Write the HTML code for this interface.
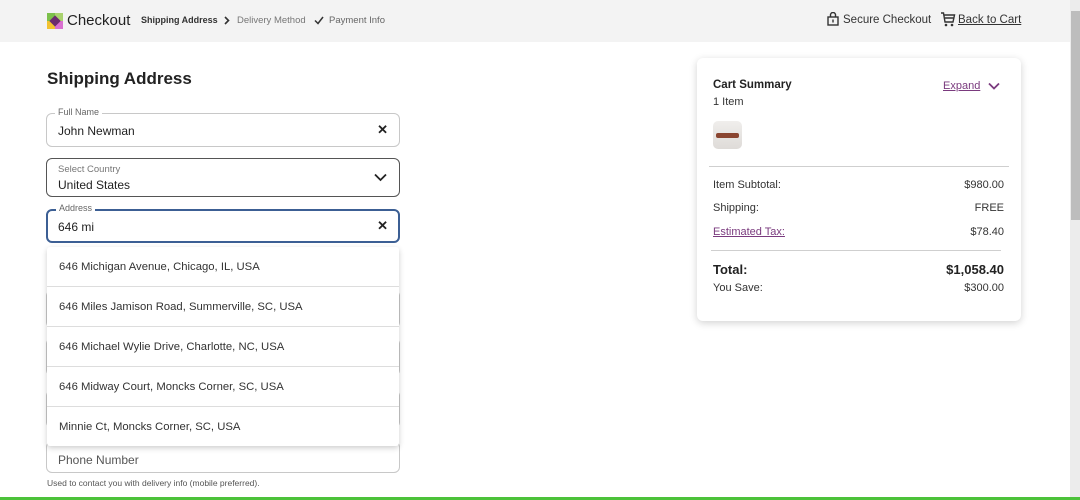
<!DOCTYPE html>
<html><head><style>
*{margin:0;padding:0;box-sizing:border-box}
body{width:1080px;height:500px;overflow:hidden;background:#fff;font-family:"Liberation Sans",sans-serif;color:#222;position:relative}
.a{position:absolute;white-space:nowrap}
.hdr{position:absolute;left:0;top:0;width:1070px;height:42px;background:#f3f3f3}
.box{position:absolute;left:46px;width:354px;border:1px solid #c8c8c8;border-radius:6px;background:#fff}
.lbl{position:absolute;left:8px;top:-7px;background:#fff;padding:0 3px;font-size:9px;color:#666}
.val{position:absolute;left:11px;font-size:12px;color:#222}
.x{position:absolute;right:11px;font-size:13px;font-weight:bold;color:#222}
.dd{position:absolute;left:47px;top:247px;width:352px;height:199px;background:#fff;box-shadow:0 2px 6px rgba(0,0,0,.2);border-radius:3px}
.it{height:40px;border-bottom:1px solid #ddd;font-size:11.3px;padding-left:12px;line-height:40px;color:#333}
.card{position:absolute;left:697px;top:58px;width:324px;height:263px;background:#fff;border-radius:6px;box-shadow:0 2px 8px rgba(0,0,0,.18)}
.r{position:absolute;font-size:11px;color:#333}
</style></head><body>
<div class="hdr"></div>
<svg class="a" style="left:46px;top:12px" width="18" height="18" viewBox="0 0 18 18">
<rect x="1" y="1" width="8" height="8" fill="#7cc04b"/>
<rect x="9" y="1" width="8" height="8" fill="#a9d26e"/>
<rect x="1" y="9" width="8" height="8" fill="#f2c230"/>
<rect x="9" y="9" width="8" height="8" fill="#d970d0"/>
<rect x="5" y="5" width="8" height="8" fill="#6b2b6e" transform="rotate(45 9 9)"/>
</svg>
<div class="a" style="left:67px;top:12px;font-size:15px;color:#222">Checkout</div>
<div class="a" style="left:141px;top:15px;font-size:9px;font-weight:bold;color:#333">Shipping Address</div>
<svg class="a" style="left:224px;top:16px" width="6" height="9" viewBox="0 0 6 9"><path d="M1 1l3.5 3.5L1 8" fill="none" stroke="#333" stroke-width="1.6"/></svg>
<div class="a" style="left:237px;top:15px;font-size:9.5px;color:#777">Delivery Method</div>
<svg class="a" style="left:314px;top:16px" width="10" height="9" viewBox="0 0 10 9"><path d="M1 4.5l3 3 5-6.5" fill="none" stroke="#333" stroke-width="1.5"/></svg>
<div class="a" style="left:329px;top:15px;font-size:9.5px;color:#666">Payment Info</div>
<svg class="a" style="left:827px;top:12px" width="12" height="14" viewBox="0 0 12 14"><rect x="1" y="5" width="10" height="8" fill="none" stroke="#333" stroke-width="1.4"/><path d="M3.5 5V3a2.5 2.5 0 0 1 5 0v2" fill="none" stroke="#333" stroke-width="1.4"/><rect x="5.3" y="7.5" width="1.4" height="3" fill="#333"/></svg>
<div class="a" style="left:843px;top:14px;font-size:11.5px;color:#333">Secure Checkout</div>
<svg class="a" style="left:940px;top:12px" width="16" height="15" viewBox="0 0 16 15"><path d="M1 1h2.5l1.5 9h8l1.5-7H4.5M5 6h9" fill="none" stroke="#333" stroke-width="1.4"/><circle cx="6" cy="13" r="1.3" fill="#333"/><circle cx="12" cy="13" r="1.3" fill="#333"/></svg>
<div class="a" style="left:958px;top:14px;font-size:11.5px;color:#333;text-decoration:underline">Back to Cart</div>
<div class="a" style="left:1070px;top:0;width:10px;height:497px;background:#ececec"></div>
<div class="a" style="left:1071px;top:11px;width:9px;height:209px;background:#bdbdbd"></div>
<div class="a" style="left:0;top:497px;width:1080px;height:3px;background:#4cc23a"></div>

<div class="a" style="left:47px;top:69px;font-size:17px;font-weight:bold;color:#222">Shipping Address</div>
<div class="box" style="top:113px;height:34px"><div class="lbl">Full Name</div><div class="val" style="top:10px">John Newman</div><div class="x" style="top:8px">✕</div></div>
<div class="box" style="top:158px;height:39px;border-color:#555"><div class="val" style="top:5px;font-size:9.5px;color:#777">Select Country</div><div class="val" style="top:19px">United States</div>
<svg class="a" style="right:12px;top:14px" width="13" height="9" viewBox="0 0 13 9"><path d="M1 1.5l5.5 5.5 5.5-5.5" fill="none" stroke="#222" stroke-width="1.8"/></svg></div>
<div class="box" style="top:209px;height:34px;border:2px solid #3c5f94"><div class="lbl" style="top:-8px">Address</div><div class="val" style="top:9px;left:10px">646 mi</div><div class="x" style="top:7px;right:10px">✕</div></div>
<div class="box" style="top:290px;height:38px"></div>
<div class="box" style="top:338px;height:38px"></div>
<div class="box" style="top:390px;height:38px"></div>
<div class="box" style="top:441px;height:32px"><div class="val" style="top:11px;color:#555">Phone Number</div></div>
<div class="dd">
<div class="it">646 Michigan Avenue, Chicago, IL, USA</div>
<div class="it">646 Miles Jamison Road, Summerville, SC, USA</div>
<div class="it">646 Michael Wylie Drive, Charlotte, NC, USA</div>
<div class="it">646 Midway Court, Moncks Corner, SC, USA</div>
<div class="it" style="border:none">Minnie Ct, Moncks Corner, SC, USA</div>
</div>
<div class="a" style="left:47px;top:478px;font-size:8.5px;color:#555">Used to contact you with delivery info (mobile preferred).</div>

<div class="card">
<div class="r" style="left:16px;top:21px;font-size:11.5px;font-weight:bold;color:#222">Cart Summary</div>
<div class="r" style="left:16px;top:38px">1 Item</div>
<div class="r" style="left:246px;top:22px;color:#7a3a7e;text-decoration:underline">Expand</div>
<svg class="a" style="left:291px;top:24px" width="12" height="8" viewBox="0 0 12 8"><path d="M1 1.5l5 5 5-5" fill="none" stroke="#7a3a7e" stroke-width="1.8"/></svg>
<div class="a" style="left:16px;top:63px;width:29px;height:28px;background:linear-gradient(#f0eeec,#dedbd8);border-radius:5px"><div class="a" style="left:3px;top:12px;width:23px;height:5px;background:#8a4530;border-radius:2px"></div></div>
<div class="a" style="left:12px;top:108px;width:300px;height:1px;background:#cfcfcf"></div>
<div class="r" style="left:16px;top:121px">Item Subtotal:</div><div class="r" style="right:17px;top:121px">$980.00</div>
<div class="r" style="left:16px;top:144px">Shipping:</div><div class="r" style="right:17px;top:144px">FREE</div>
<div class="r" style="left:16px;top:168px;color:#7a3a7e;text-decoration:underline">Estimated Tax:</div><div class="r" style="right:17px;top:168px">$78.40</div>
<div class="a" style="left:14px;top:192px;width:290px;height:1px;background:#cfcfcf"></div>
<div class="r" style="left:16px;top:204px;font-size:13px;font-weight:bold;color:#222">Total:</div><div class="r" style="right:17px;top:204px;font-size:13px;font-weight:bold;color:#222">$1,058.40</div>
<div class="r" style="left:16px;top:224px">You Save:</div><div class="r" style="right:17px;top:224px">$300.00</div>
</div>
</body></html>
